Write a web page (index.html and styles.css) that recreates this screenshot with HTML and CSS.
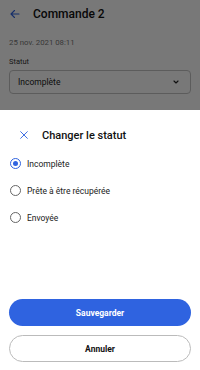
FILE: index.html
```html
<!DOCTYPE html>
<html lang="fr">
<head>
<meta charset="utf-8">
<link rel="stylesheet" href="styles.css">
</head>
<body>
<div class="app">
  <header class="topbar">
    <svg class="back" viewBox="0 0 24 24" width="12" height="12"><path d="M20 12H5M11 5l-7 7 7 7" fill="none" stroke="#2f63e0" stroke-width="2.2" stroke-linecap="round" stroke-linejoin="round"/></svg>
    <h1 class="title">Commande 2</h1>
  </header>
  <main class="content">
    <div class="date">25 nov. 2021 08:11</div>
    <div class="label">Statut</div>
    <div class="select">
      <span>Incomplète</span>
      <svg viewBox="0 0 24 24" width="8" height="8"><path d="M6 9l6 6 6-6" fill="none" stroke="#222" stroke-width="3.5" stroke-linecap="round" stroke-linejoin="round"/></svg>
    </div>
  </main>
  <div class="overlay"></div>
  <section class="sheet">
    <div class="sheet-head">
      <svg class="close" viewBox="0 0 24 24" width="10" height="10"><path d="M4 4l16 16M20 4L4 20" fill="none" stroke="#2f63e0" stroke-width="2.2" stroke-linecap="round"/></svg>
      <h2 class="sheet-title">Changer le statut</h2>
    </div>
    <div class="options">
      <label class="opt"><span class="radio on"></span>Incomplète</label>
      <label class="opt"><span class="radio"></span>Prête à être récupérée</label>
      <label class="opt"><span class="radio"></span>Envoyée</label>
    </div>
    <div class="actions">
      <button class="btn primary">Sauvegarder</button>
      <button class="btn ghost">Annuler</button>
    </div>
  </section>
</div>
</body>
</html>
```
FILE: styles.css
```css
* { box-sizing: border-box; }
html, body { margin: 0; padding: 0; }
body { font-family: Roboto, "Noto Sans", Arial, sans-serif; background: #fff; color: #222; }
.app { position: relative; width: 200px; height: 370px; overflow: hidden; background: #fff; }
.topbar { height: 27px; display: flex; align-items: center; padding-left: 9px; gap: 12px; }
.back { display: block; }
.title { margin: 0; font-size: 12px; font-weight: 500; color: #111; }
.content { padding: 0 9px; }
.date { margin-top: 11px; font-size: 7.8px; color: #777; line-height: 10px; }
.label { margin-top: 9px; font-size: 7.5px; color: #333; line-height: 10px; }
.select { margin-top: 3px; height: 24px; border: 1px solid #c4c4c4; border-radius: 4px; display: flex; align-items: center; justify-content: space-between; padding: 0 10px 0 8px; font-size: 8.5px; color: #222; }
.overlay { position: absolute; inset: 0; background: rgba(0,0,0,0.53); }
.sheet { position: absolute; left: 0; right: 0; bottom: 0; top: 110px; background: #fff; display: flex; flex-direction: column; }
.sheet-head { margin-top: 10px; height: 30px; display: flex; align-items: center; padding-left: 19px; gap: 13px; }
.sheet-head .close { display: block; }
.sheet-title { margin: 0; font-size: 11px; font-weight: 500; color: #111; }
.options { display: flex; flex-direction: column; }
.opt { height: 27px; display: flex; align-items: center; padding-left: 10px; gap: 6px; font-size: 8.5px; color: #222; }
.radio { width: 11px; height: 11px; border-radius: 50%; border: 1px solid #666; display: inline-block; position: relative; flex: none; }
.radio.on { border-color: #2f63e0; }
.radio.on::after { content: ""; position: absolute; left: 2px; top: 2px; width: 5px; height: 5px; border-radius: 50%; background: #2f63e0; }
.actions { margin-top: auto; padding: 0 9px 8px; display: flex; flex-direction: column; gap: 9px; }
.btn { height: 27px; border-radius: 14px; font-family: inherit; font-size: 8.5px; font-weight: 700; cursor: pointer; }
.btn.primary { background: #2f63e0; color: #fff; border: none; }
.btn.ghost { background: #fff; color: #111; border: 1px solid #bbb; }
```
